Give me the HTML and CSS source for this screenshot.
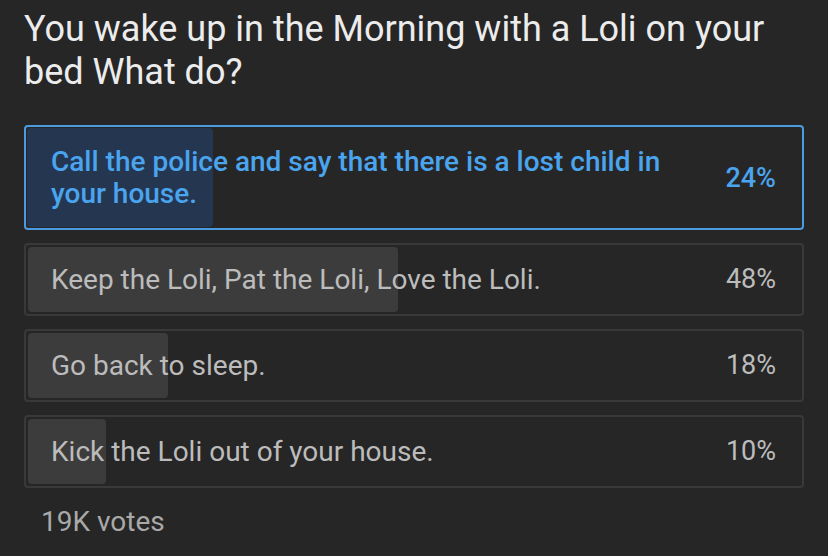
FILE: index.html
```html
<!DOCTYPE html>
<html>
<head>
<meta charset="utf-8">
<link rel="stylesheet" href="styles.css">
</head>
<body>
<div class="poll">
  <h1 class="title">You wake up in the Morning with a Loli on your bed What do?</h1>
  <div class="options">
    <div class="option selected">
      <div class="fill" style="width: 24%"></div>
      <div class="content">
        <span class="label">Call the police and say that there is a lost child in your house.</span>
        <span class="pct">24%</span>
      </div>
    </div>
    <div class="option">
      <div class="fill" style="width: 47.7%"></div>
      <div class="content">
        <span class="label">Keep the Loli, Pat the Loli, Love the Loli.</span>
        <span class="pct">48%</span>
      </div>
    </div>
    <div class="option">
      <div class="fill" style="width: 18%"></div>
      <div class="content">
        <span class="label">Go back to sleep.</span>
        <span class="pct">18%</span>
      </div>
    </div>
    <div class="option">
      <div class="fill" style="width: 10%"></div>
      <div class="content">
        <span class="label">Kick the Loli out of your house.</span>
        <span class="pct">10%</span>
      </div>
    </div>
  </div>
  <div class="votes">19K votes</div>
</div>
</body>
</html>
```
FILE: styles.css
```css
html, body {
  margin: 0;
  padding: 0;
  background: #262626;
}
body {
  font-family: Roboto, "Liberation Sans", sans-serif;
  width: 828px;
  height: 556px;
  overflow: hidden;
}
.poll {
  padding: 8px 24px 0 24px;
}
.title {
  margin: 0;
  font-size: 36px;
  font-weight: 400;
  line-height: 43px;
  color: #ececec;
}
.options {
  margin-top: 31px;
  display: flex;
  flex-direction: column;
  gap: 13px;
}
.option {
  display: grid;
  border: 2px solid #393939;
  border-radius: 4px;
}
.option.selected {
  border-color: #4b9be0;
}
.fill {
  grid-area: 1 / 1;
  margin: 2px;
  border-radius: 4px;
  background: #3c3c3c;
}
.selected .fill {
  margin: 1px;
  background: #243650;
}
.content {
  grid-area: 1 / 1;
  display: flex;
  align-items: center;
  justify-content: space-between;
  gap: 40px;
  padding: 18px 26px 18px 25px;
  font-size: 28px;
  line-height: 33px;
  color: #bcbcbc;
}
.selected .content {
  padding: 18.5px 26px 18.5px 25px;
  line-height: 32px;
  color: #4aa4ee;
  font-weight: 500;
}
.pct {
  flex: none;
  font-size: 27px;
}
.votes {
  margin-top: 18px;
  padding-left: 17px;
  font-size: 28px;
  line-height: 32px;
  color: #a9a9a9;
}
```
